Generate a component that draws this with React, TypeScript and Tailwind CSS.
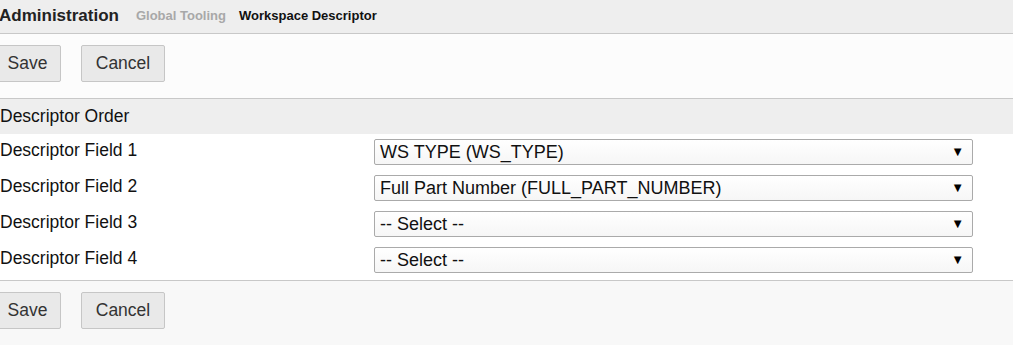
import React from 'react';

const fields = [
  { label: 'Descriptor Field 1', value: 'WS TYPE (WS_TYPE)' },
  { label: 'Descriptor Field 2', value: 'Full Part Number (FULL_PART_NUMBER)' },
  { label: 'Descriptor Field 3', value: '-- Select --' },
  { label: 'Descriptor Field 4', value: '-- Select --' },
];

function Buttons() {
  return (
    <div className="flex gap-[20px] -ml-[6px]">
      <button className="h-[37px] w-[67px] rounded-[2px] border border-[#c6c6c6] bg-[#e9e9e9] text-[17.5px] text-[#333]">
        Save
      </button>
      <button className="h-[37px] w-[84px] rounded-[2px] border border-[#c6c6c6] bg-[#e9e9e9] text-[17.5px] text-[#333]">
        Cancel
      </button>
    </div>
  );
}

export default function App() {
  return (
    <div className="h-[345px] w-[1013px] overflow-hidden bg-[#f8f8f8] font-['Liberation_Sans',Arial,sans-serif] text-[#111]">
      <div className="flex h-[34px] items-center border-b border-[#c8c8c8] bg-[#eeeeee] pb-[2px]">
        <h1 className="-ml-[1px] whitespace-nowrap text-[17px] font-bold text-[#222]">Administration</h1>
        <span className="ml-[17px] whitespace-nowrap text-[13px] font-bold text-[#a8a8a8]">Global Tooling</span>
        <span className="ml-[13px] whitespace-nowrap text-[13px] font-bold text-[#111]">Workspace Descriptor</span>
      </div>
      <div className="h-[65px] border-b border-[#c8c8c8] bg-[#fcfcfc] pt-[11px]">
        <Buttons />
      </div>
      <div className="flex h-[35px] items-center bg-[#eeeeee] pb-[1px] text-[17.5px]">
        <span>Descriptor Order</span>
      </div>
      <div className="flex flex-col gap-[10px] border-b border-[#c8c8c8] bg-white pt-[5px] pb-[7px]">
        {fields.map((f) => (
          <div key={f.label} className="flex h-[26px] items-center">
            <div className="w-[374px] -mt-[4px] text-[17.5px] leading-[24px]">{f.label}</div>
            <div className="flex h-[26px] w-[599px] items-center justify-between rounded-[2px] border border-[#aaa] bg-gradient-to-b from-white to-[#f6f6f6] pl-[5px] pr-[8px] text-[18px] text-[#111]">
              <span>{f.value}</span>
              <span className="text-[13px] text-black">▼</span>
            </div>
          </div>
        ))}
      </div>
      <div className="h-[65px] bg-[#f8f8f8] pt-[11px]">
        <Buttons />
      </div>
    </div>
  );
}
